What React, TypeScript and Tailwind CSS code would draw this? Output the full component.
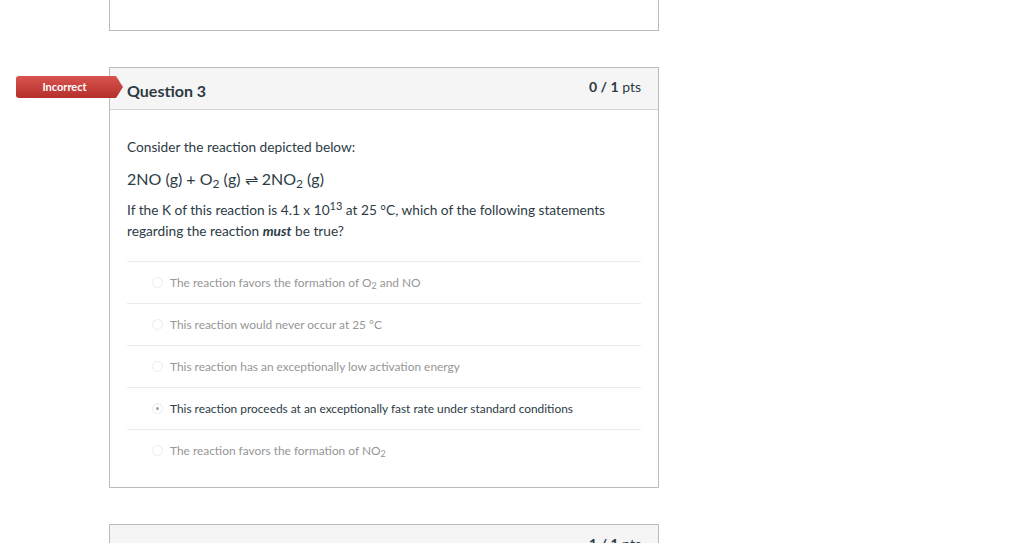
import React from "react";

const Radio = ({ checked }: { checked?: boolean }) => (
  <span className="relative inline-block w-[11px] h-[11px] rounded-full border border-[#ececec] bg-white shrink-0">
    {checked && (
      <span className="absolute left-[3px] top-[3px] w-[3px] h-[3px] rounded-full bg-[#a0a0a0]" />
    )}
  </span>
);

const Answer = ({ children, checked }: { children: React.ReactNode; checked?: boolean }) => (
  <div className="h-[42px] border-t border-[#ebebeb] flex items-center pl-[25px]">
    <Radio checked={checked} />
    <span className={"ml-[7px] text-[11.9px] leading-none " + (checked ? "text-[#2d3b45]" : "text-[#969696]")}>
      {children}
    </span>
  </div>
);

export default function App() {
  return (
    <div className="h-[543px] bg-white overflow-hidden" style={{ fontFamily: "Lato, 'Open Sans', sans-serif" }}>
      <div className="ml-[109px] w-[550px]">
        <div className="h-[31px] border border-t-0 border-[#bcbcbc] bg-white" />
        <div className="relative mt-[36px] border border-[#bcbcbc]">
          <div className="absolute left-[-94px] top-[8px] flex items-center">
            <div className="h-[22px] w-[97px] rounded-l-[3px] bg-gradient-to-b from-[#d9534f] to-[#b52f2b] flex items-center justify-center text-white text-[11px] font-bold">
              Incorrect
            </div>
            <svg width="10" height="22" viewBox="0 0 10 22" className="block">
              <defs>
                <linearGradient id="g" x1="0" y1="0" x2="0" y2="1">
                  <stop offset="0" stopColor="#d9534f" />
                  <stop offset="1" stopColor="#b52f2b" />
                </linearGradient>
              </defs>
              <polygon points="0,0 3,0 10,11 3,22 0,22" fill="url(#g)" />
            </svg>
          </div>
          <div className="h-[42px] bg-[#f5f5f5] border-b border-[#d6d6d6] flex items-center justify-between pl-[17px] pr-[17px]">
            <span className="text-[16px] font-bold text-[#2d3b45] mt-[4px]">Question 3</span>
            <span className="text-[14px] text-[#2d3b45] mb-[4px]">
              <span className="font-bold">0 / 1</span> pts
            </span>
          </div>
          <div className="px-[17px] pt-[26px] pb-[16px] text-[#2d3b45]">
            <p className="text-[13.7px] leading-[21px]">Consider the reaction depicted below:</p>
            <p className="text-[16px] leading-[24px] mt-[10px]">
              2NO (g) + O<sub className="text-[12px] leading-none">2</sub> (g) ⇌ 2NO<sub className="text-[12px] leading-none">2</sub> (g)
            </p>
            <p className="text-[13.7px] leading-[21px] mt-[8px]">
              If the K of this reaction is 4.1 x 10<sup className="text-[11px] leading-none">13</sup> at 25 °C, which of the following statements regarding the reaction <b className="italic">must</b> be true?
            </p>
            <div className="mt-[20px]">
              <Answer>
                The reaction favors the formation of O<sub className="text-[9px] leading-none">2</sub> and NO
              </Answer>
              <Answer>This reaction would never occur at 25 °C</Answer>
              <Answer>This reaction has an exceptionally low activation energy</Answer>
              <Answer checked>This reaction proceeds at an exceptionally fast rate under standard conditions</Answer>
              <Answer>
                The reaction favors the formation of NO<sub className="text-[9px] leading-none">2</sub>
              </Answer>
            </div>
          </div>
        </div>
        <div className="mt-[36px] border border-[#bcbcbc]">
          <div className="h-[42px] bg-[#f5f5f5] border-b border-[#d6d6d6] flex items-center justify-between pl-[17px] pr-[17px]">
            <span className="text-[16px] font-bold text-[#2d3b45] mt-[4px]">Question 4</span>
            <span className="text-[14px] text-[#2d3b45] mb-[4px]">
              <span className="font-bold">1 / 1</span> pts
            </span>
          </div>
        </div>
      </div>
    </div>
  );
}
